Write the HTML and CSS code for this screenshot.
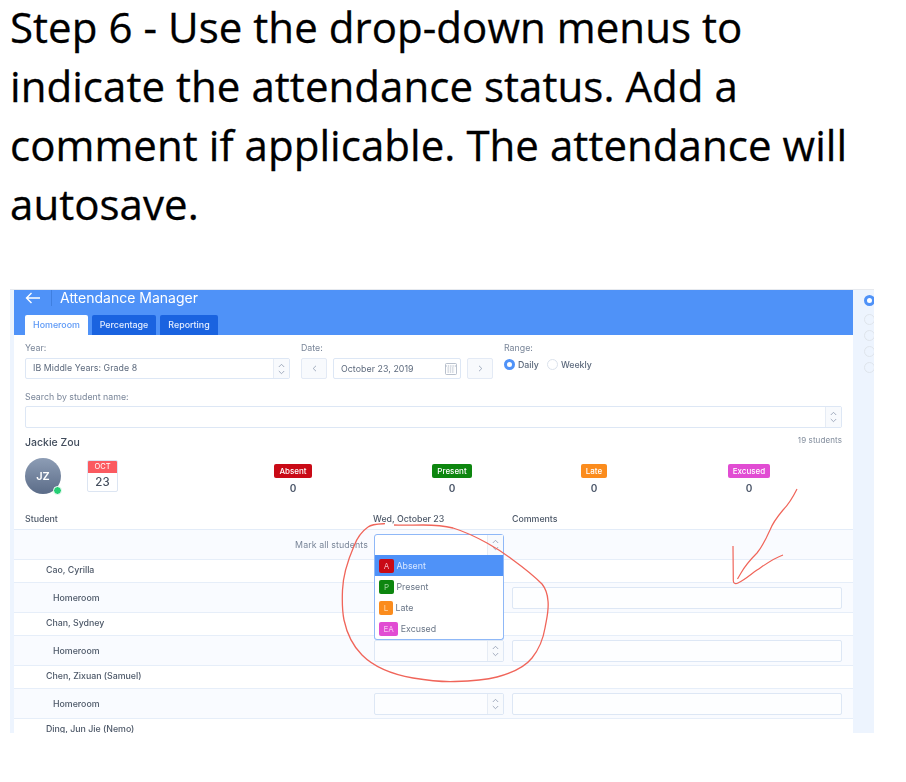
FILE: index.html
```html
<!DOCTYPE html>
<html lang="en">
<head>
<meta charset="utf-8">
<title>Step 6</title>
<link rel="stylesheet" href="styles.css">
</head>
<body>
<h1 class="step">Step 6 - Use the drop-down menus to<br>indicate the attendance status. Add a<br>comment if applicable. The attendance will<br>autosave.</h1>

<div class="shot">
  <div class="strip"></div>
  <main class="app">
    <header class="bar">
      <div class="bar-top">
        <svg class="back" width="16" height="12" viewBox="0 0 16 12"><path d="M15 6H1.5M6.500 1 1.500 6l5 5" fill="none" stroke="#fff" stroke-width="1.4"/></svg>
        <span class="bar-div"></span>
        <span class="bar-title">Attendance Manager</span>
      </div>
      <nav class="tabs">
        <span class="tab tab-on">Homeroom</span>
        <span class="tab tab-pct">Percentage</span>
        <span class="tab tab-rep">Reporting</span>
      </nav>
    </header>

    <section class="filters">
      <div class="f-year">
        <div class="lbl">Year:</div>
        <div class="ctl"><span class="val">IB Middle Years: Grade 8</span><span class="spin"><svg width="7" height="12" viewBox="0 0 7 12"><path d="M.8 4 3.500 1.300 6.200 4M.8 8 3.500 10.700 6.200 8" fill="none" stroke="#8e9bb0" stroke-width=".8"/></svg></span></div>
      </div>
      <div class="f-date">
        <div class="lbl">Date:</div>
        <div class="date-row">
          <span class="nav-btn"><svg width="5" height="7" viewBox="0 0 5 7"><path d="M4 .8 1.200 3.500 4 6.200" fill="none" stroke="#8e9bb0" stroke-width=".8"/></svg></span>
          <div class="ctl date-ctl"><span class="val">October 23, 2019</span><svg class="cal-ico" width="12" height="13" viewBox="0 0 12 13"><rect x=".5" y="1.500" width="11" height="11" rx="1" fill="none" stroke="#a7b1c0" stroke-width=".8"/><path d="M.5 4h11M2.500 6h7M2.500 8h7M2.500 10h7" stroke="#a7b1c0" stroke-width=".9" stroke-dasharray="1.400 .9" fill="none"/></svg></div>
          <span class="nav-btn"><svg width="5" height="7" viewBox="0 0 5 7"><path d="M1 .8 3.800 3.500 1 6.200" fill="none" stroke="#8e9bb0" stroke-width=".8"/></svg></span>
        </div>
      </div>
      <div class="f-range">
        <div class="lbl">Range:</div>
        <div class="radios">
          <span class="radio radio-on"></span><span class="r-txt">Daily</span>
          <span class="radio"></span><span class="r-txt">Weekly</span>
        </div>
      </div>
    </section>

    <section class="search">
      <div class="lbl">Search by student name:</div>
      <div class="ctl search-ctl"><span class="val"></span><span class="spin"><svg width="7" height="12" viewBox="0 0 7 12"><path d="M.8 4 3.500 1.300 6.200 4M.8 8 3.500 10.700 6.200 8" fill="none" stroke="#8e9bb0" stroke-width=".8"/></svg></span></div>
    </section>

    <div class="who">
      <span class="who-name">Jackie Zou</span>
      <span class="who-count">19 students</span>
    </div>

    <section class="stats">
      <div class="avatar">JZ<span class="dot"></span></div>
      <div class="cal"><div class="cal-m">OCT</div><div class="cal-d">23</div></div>
      <div class="stat s1"><span class="badge b-abs">Absent</span><b>0</b></div>
      <div class="stat s2"><span class="badge b-pre">Present</span><b>0</b></div>
      <div class="stat s3"><span class="badge b-late">Late</span><b>0</b></div>
      <div class="stat s4"><span class="badge b-exc">Excused</span><b>0</b></div>
    </section>

    <div class="thead">
      <span class="th-a">Student</span><span class="th-b">Wed, October 23</span><span class="th-c">Comments</span>
    </div>

    <div class="row row-sub row-mark">
      <span class="mark">Mark all students</span>
      <div class="ctl sel sel-open"><span class="val"></span><span class="spin"><svg width="7" height="12" viewBox="0 0 7 12"><path d="M.8 4 3.500 1.300 6.200 4M.8 8 3.500 10.700 6.200 8" fill="none" stroke="#8e9bb0" stroke-width=".8"/></svg></span></div>
    </div>
    <div class="row row-name">Cao, Cyrilla</div>
    <div class="row row-sub">
      <span class="room">Homeroom</span>
      <div class="ctl sel"><span class="val"></span><span class="spin"><svg width="7" height="12" viewBox="0 0 7 12"><path d="M.8 4 3.500 1.300 6.200 4M.8 8 3.500 10.700 6.200 8" fill="none" stroke="#8e9bb0" stroke-width=".8"/></svg></span></div>
      <div class="comment"></div>
    </div>
    <div class="row row-name">Chan, Sydney</div>
    <div class="row row-sub">
      <span class="room">Homeroom</span>
      <div class="ctl sel"><span class="val"></span><span class="spin"><svg width="7" height="12" viewBox="0 0 7 12"><path d="M.8 4 3.500 1.300 6.200 4M.8 8 3.500 10.700 6.200 8" fill="none" stroke="#8e9bb0" stroke-width=".8"/></svg></span></div>
      <div class="comment"></div>
    </div>
    <div class="row row-name">Chen, Zixuan (Samuel)</div>
    <div class="row row-sub">
      <span class="room">Homeroom</span>
      <div class="ctl sel"><span class="val"></span><span class="spin"><svg width="7" height="12" viewBox="0 0 7 12"><path d="M.8 4 3.500 1.300 6.200 4M.8 8 3.500 10.700 6.200 8" fill="none" stroke="#8e9bb0" stroke-width=".8"/></svg></span></div>
      <div class="comment"></div>
    </div>
    <div class="row row-name">Ding, Jun Jie (Nemo)</div>

    <ul class="menu">
      <li class="opt opt-on"><span class="chip b-abs">A</span>Absent</li>
      <li class="opt"><span class="chip b-pre">P</span>Present</li>
      <li class="opt"><span class="chip b-late">L</span>Late</li>
      <li class="opt"><span class="chip b-exc">EA</span>Excused</li>
    </ul>
  </main>
  <aside class="side">
    <span class="pip pip-on"></span>
    <span class="pip"></span>
    <span class="pip"></span>
    <span class="pip"></span>
    <span class="pip"></span>
  </aside>
</div>

<svg class="ink" width="906" height="782" viewBox="0 0 906 782">
  <path d="M385 523.700C378 524 372 524 368 527C361 532 357 538 354 546C348 560 343 575 342.500 590C342 602 342 610 344 620C347 634 352 645 362 655C372 665 390 674 413 678C428 680.500 442 682 455 681.500C472 681 485 680 497 677C512 673 524 668 532 658C540 648 543 640 545 628C547 617 549 610 548 601C547.500 594 546 589 542 584C532 574 524 568 513 560C504 553 496 548 487 543C476 537 466 532 453 528C443 525.500 433 525 423 525C413 525 403 525.500 394 525" fill="none" stroke="#f0655a" stroke-width="1.300"/>
  <path d="M797 489C793 497 789 504 783 510C778 516 773 522 770 530C766 539 762 547 757 553C750 560 745 566 741 573L737.500 579" fill="none" stroke="#f0655a" stroke-width="1.200"/>
  <path d="M733 546 733.300 581C733.500 584 736 584 738 583C746 579 751 574 757 570C766 564 774 558 783 555" fill="none" stroke="#f0655a" stroke-width="1.200"/>
</svg>
</body>
</html>
```
FILE: styles.css
```css
* { box-sizing: border-box; }
html, body { margin: 0; padding: 0; background: #fff; }
body { width: 906px; height: 782px; overflow: hidden; position: relative; }

.step {
  margin: -3px 0 0;
  padding: 0 0 0 10px;
  height: 293px;
  font: 400 42px/59px "Open Sans", sans-serif;
  letter-spacing: .05px;
  -webkit-text-stroke: .3px #000;
  color: #000;
}

.shot {
  display: flex;
  width: 864px;
  height: 443px;
  margin-left: 10px;
  overflow: hidden;
  font-family: Inter, sans-serif;
  color: #4a5568;
  filter: blur(.35px);
  box-shadow: 0 -1px 0 #e6e9ee;
}
.strip { width: 4px; background: #edf4fe; flex: none; }
.side { width: 21px; background: #edf4fe; flex: none; display: flex; flex-direction: column; padding: 5px 0 0 11px; align-items: flex-start; }
.app { position: relative; width: 839px; flex: none; background: #fff; }

/* header */
.bar { height: 45px; background: #4f92f8; padding: 0 0 0 11px; display: flex; flex-direction: column; }
.bar-top { height: 25px; display: flex; align-items: center; padding-bottom: 9px; }
.bar-div { width: 1px; height: 16px; background: #3f7fe0; margin: 0 8px 0 10px; }
.bar-title { font-size: 14px; line-height: 16px; color: #fff; letter-spacing: 0; }
.tabs { display: flex; gap: 4px; }
.tab { height: 20px; width: 63px; text-align: center; background: #1a63e0; color: #e6efff; font-size: 8.900px; font-weight: 500; line-height: 20px; border-radius: 2px 2px 0 0; }
.tab-on { background: #fff; color: #5a97f6; }
.tab-pct { width: 64px; }
.tab-rep { width: 58px; }

/* filters */
.lbl { font-size: 8.800px; line-height: 12px; color: #7a8699; }
.filters { display: flex; padding: 7px 0 0 11px; height: 56px; }
.f-year { width: 265px; margin-right: 11px; }
.f-date { width: 192px; margin-right: 11px; }
.ctl { display: flex; align-items: stretch; border: 1px solid #dde7f5; border-radius: 2px; background: #fff; height: 21px; }
.f-year .lbl, .f-date .lbl { margin-bottom: 4px; }
.val { flex: 1; font-size: 8.800px; line-height: 18px; padding-left: 7px; color: #5d6a7d; letter-spacing: .06px; }
.spin { width: 16px; flex: none; border-left: 1px solid #e6ecf5; background: #f8fafd; display: flex; align-items: center; justify-content: center; }
.date-row { display: flex; gap: 6px; align-items: stretch; }
.nav-btn { width: 26px; height: 21px; flex: none; border: 1px solid #e3eaf5; border-radius: 2px; background: #f8fafd; display: flex; align-items: center; justify-content: center; }
.date-ctl { flex: 1; align-items: center; padding-right: 3px; }
.f-range .lbl { margin-bottom: 3px; }
.radios { display: flex; align-items: center; height: 15px; }
.radio { width: 11px; height: 11px; border-radius: 50%; border: 1px solid #dbe2ec; background: #fff; flex: none; }
.radio-on { border: 3px solid #4f92f8; }
.r-txt { font-size: 8.800px; color: #5d6a7d; font-weight: 500; margin: 0 8px 0 3px; }

/* search */
.search { padding: 0 0 0 11px; }
.search .lbl { margin-bottom: 3px; }
.search-ctl { height: 22px; width: 817px; }

.who { margin: 7px 0 0 11px; width: 817px; display: flex; justify-content: space-between; align-items: center; height: 14px; }
.who-name { font-size: 10.500px; color: #414c5c; font-weight: 500; }
.who-count { font-size: 8px; color: #7f8a9a; letter-spacing: .1px; margin-top: -4px; }

/* stats */
.stats { display: grid; grid-template-columns: 62px 31px 95px 160px 158px 126px 184px; margin-top: 9px; padding-left: 11px; height: 36px; }
.avatar { grid-column: 1; width: 36px; height: 36px; border-radius: 50%; background: linear-gradient(#8d9db5, #5b6c88); color: #fff; font-size: 11px; font-weight: 600; line-height: 36px; text-align: center; position: relative; }
.dot { position: absolute; right: -1px; bottom: -1px; width: 9px; height: 9px; border-radius: 50%; background: #25cf74; border: 1px solid #fff; }
.cal { grid-column: 2; width: 31px; height: 32px; margin-top: 2px; border: 1px solid #dce5f2; border-radius: 2px; overflow: hidden; text-align: center; background: #fff; }
.cal-m { height: 12px; background: #fb5a60; color: #fff; font-size: 7.500px; line-height: 12px; }
.cal-d { font-size: 11.500px; font-weight: 500; line-height: 18px; color: #454f5e; }
.stat { display: flex; flex-direction: column; align-items: center; padding-top: 6px; }
.stat b { font-size: 10px; font-weight: 600; line-height: 12px; margin-top: 4px; color: #4a5568; }
.s1 { grid-column: 4; } .s2 { grid-column: 5; } .s3 { grid-column: 6; } .s4 { grid-column: 7; }
.badge { height: 14px; padding: 0 5px; font-size: 8px; line-height: 14px; color: #fff; border-radius: 2px; font-weight: 500; }
.b-abs { background: #c90a16; }
.b-pre { background: #0d860f; }
.b-late { background: #fb8c1d; }
.b-exc { background: #e14cd3; }

/* table */
.thead { margin-top: 18px; height: 18px; border-bottom: 1px solid #e3ecf8; display: grid; grid-template-columns: 348px 139px 1fr; padding-left: 11px; font-size: 8.800px; font-weight: 500; line-height: 14px; color: #4d5868; }
.row { border-bottom: 1px solid #e6eef9; }
.row-name { height: 23px; padding-left: 32px; font-size: 8.800px; line-height: 20px; color: #4d5868; font-weight: 500; background: #fff; }
.row-sub { height: 30px; background: #f9fbff; display: grid; grid-template-columns: 360px 130px 338px; grid-template-areas: "a b c"; align-items: center; }
.room { grid-area: a; padding-left: 39px; font-size: 8.800px; color: #4d5868; font-weight: 500; }
.mark { grid-area: a; text-align: right; font-size: 8.800px; letter-spacing: .1px; color: #7a8699; padding-right: 6px; }
.sel { grid-area: b; height: 22px; background: #fcfdff; }
.sel-open { background: #fff; border-color: #8fb8f7; border-radius: 3px 3px 0 0; }
.comment { grid-area: c; margin-left: 8px; height: 22px; width: 330px; border: 1px solid #dde7f5; border-radius: 2px; background: #fdfeff; }

/* dropdown */
.menu { position: absolute; left: 360px; top: 265px; width: 130px; height: 85px; margin: 0; padding: 0; list-style: none; background: #fff; border: 1px solid #8fb8f7; border-top: 0; border-radius: 0 0 3px 3px; }
.opt { height: 21px; display: flex; align-items: center; padding-left: 4px; font-size: 8.800px; color: #6a7687; gap: 2.500px; }
.opt-on { background: #4f92f8; color: #d8e7ff; }
.chip { height: 14px; min-width: 15px; padding: 0 3px; line-height: 14px; text-align: center; font-size: 8px; color: #f3b6c0; border-radius: 2px; }
.b-pre.chip { color: #9ed39e; }
.b-late.chip { color: #ffdcb0; min-width: 14px; }
.b-exc.chip { color: #f8c6f0; padding: 0 4.500px; }

/* side */
.pip { width: 11px; height: 11px; border: 1px solid #dfe5ec; border-radius: 50%; margin-bottom: 5px; flex: none; }
.pip-on { border: 3px solid #4f92f8; background: #fff; margin-bottom: 8px; }

.ink { position: absolute; left: 0; top: 0; pointer-events: none; }
```
